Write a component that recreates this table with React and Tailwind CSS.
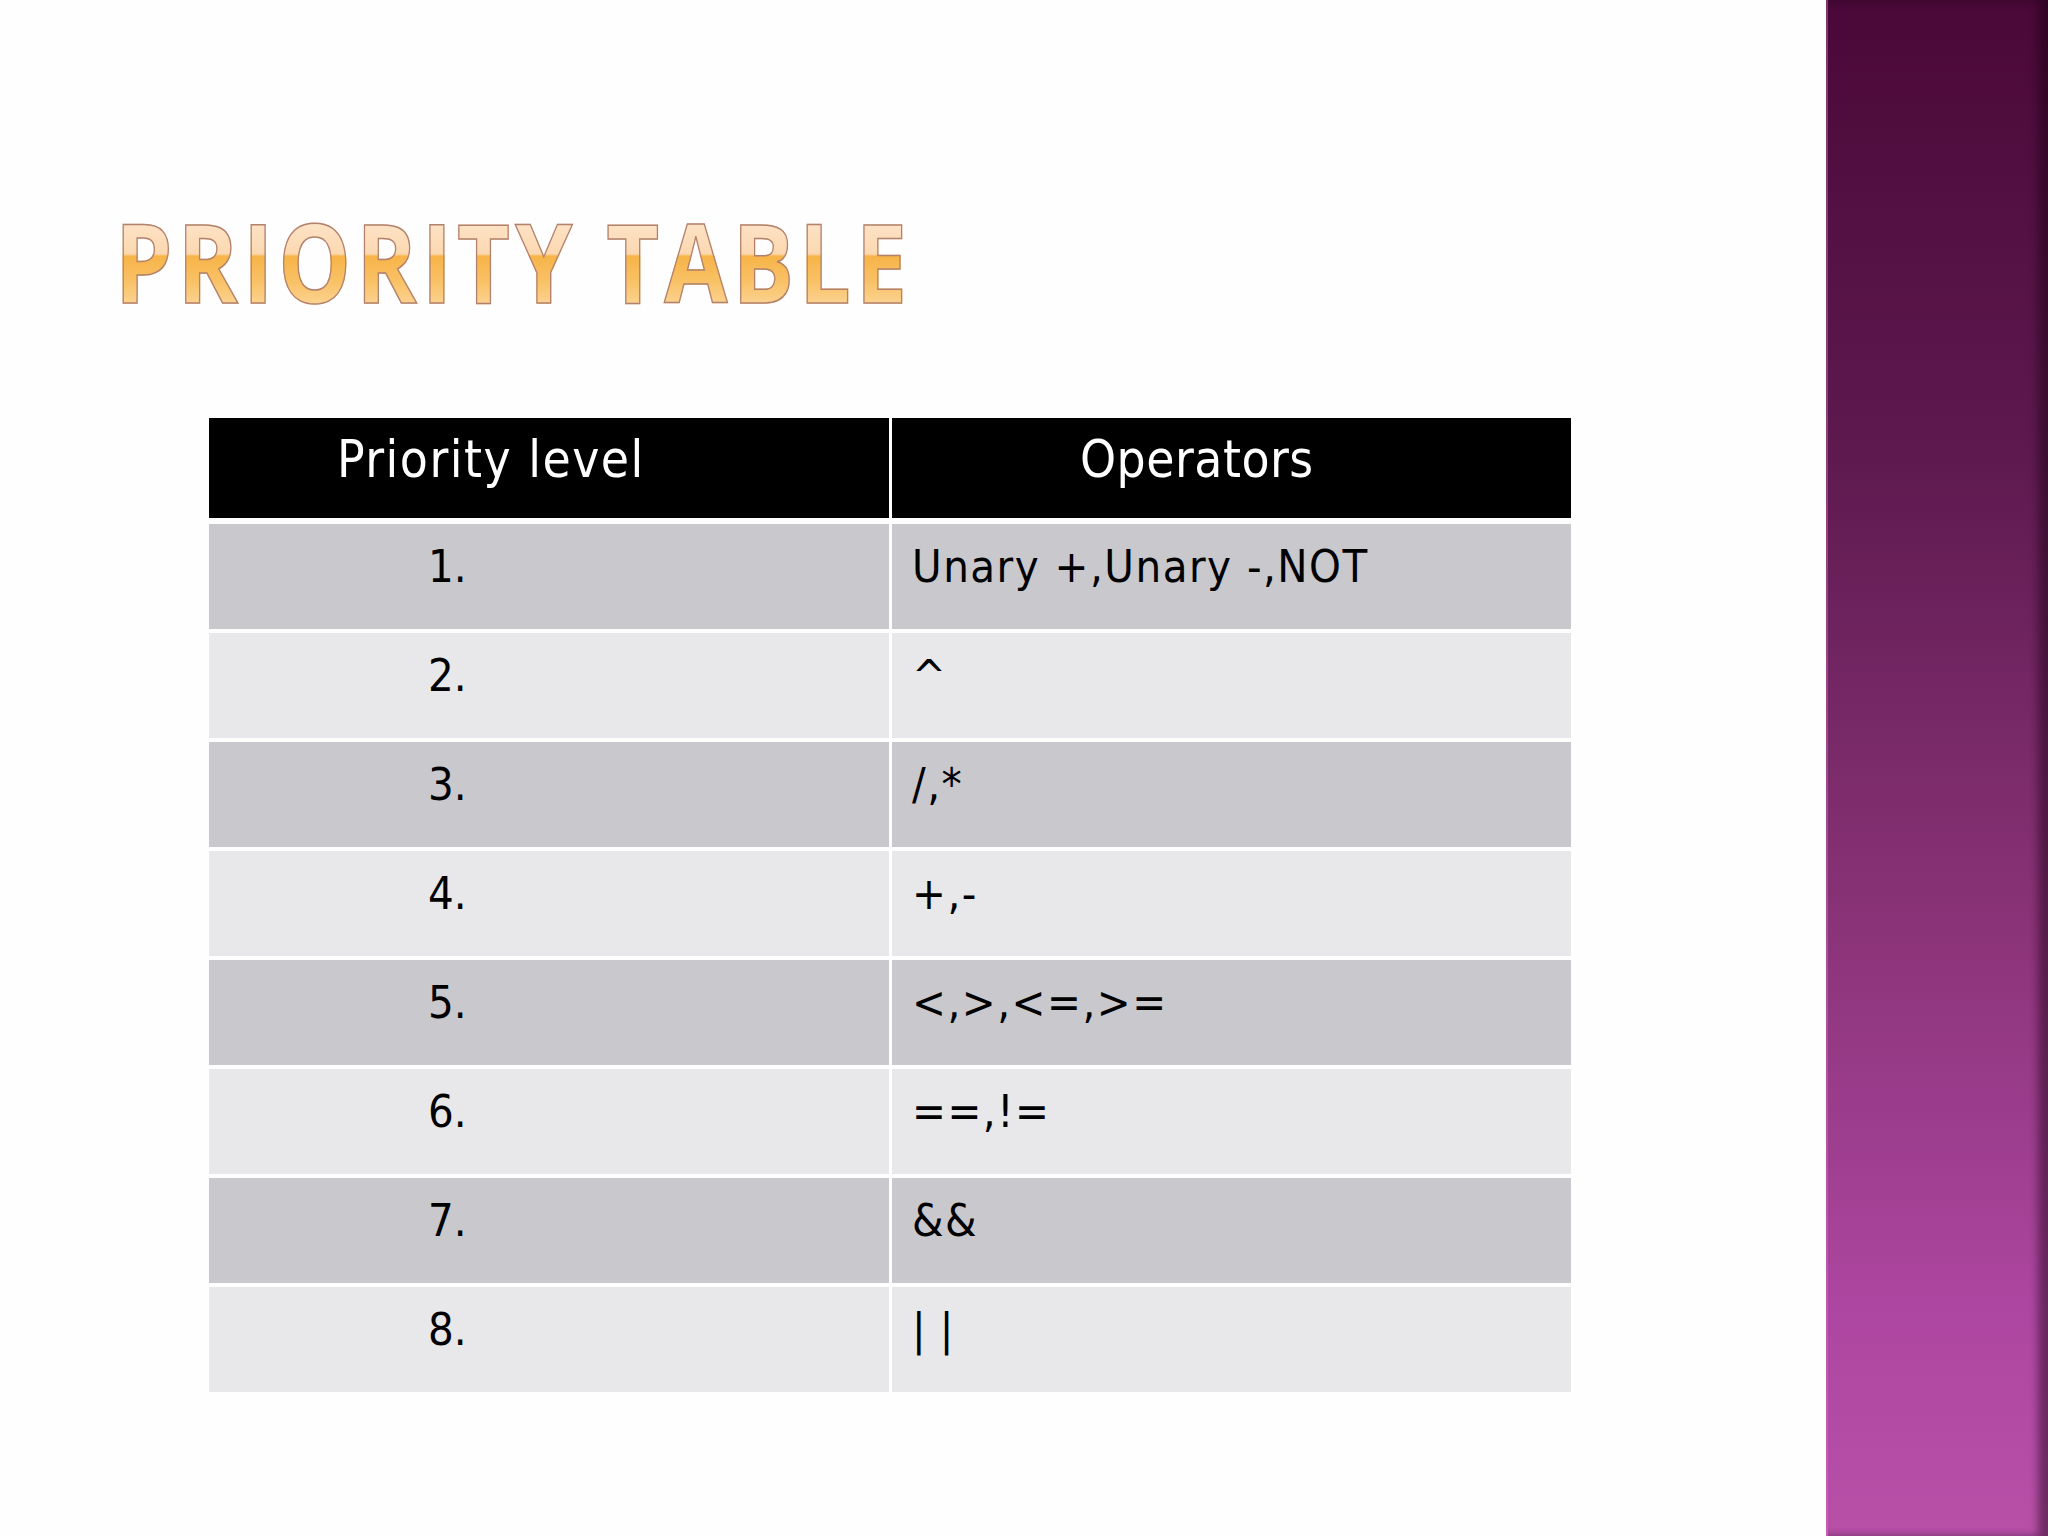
const rows = [
  ['1.', 'Unary +,Unary -,NOT'],
  ['2.', '^'],
  ['3.', '/,*'],
  ['4.', '+,-'],
  ['5.', '<,>,<=,>='],
  ['6.', '==,!='],
  ['7.', '&&'],
  ['8.', '||'],
];

export default function App() {
  return (
    <div className="flex h-[1536px] w-[2048px] overflow-hidden bg-[#fefefe]">
      {/* slide body */}
      <div className="flex flex-1 flex-col pt-[206px]">
        <div className="pl-[115px]">
          <h1
            className="inline-block origin-left scale-x-[0.84] bg-[linear-gradient(180deg,#fde8d2_0%,#fcd8b0_44%,#f7b448_46%,#f9c267_70%,#fcdba6_100%)] bg-clip-text text-[109px] leading-none font-bold tracking-[6px] text-transparent [-webkit-text-stroke:1.5px_#b3826f]"
            style={{ fontFamily: '"Open Sans", sans-serif' }}
          >
            PRIORITY TABLE
          </h1>
        </div>

        {/* table */}
        <div
          className="mt-[103px] ml-[209px] w-[1362px]"
          style={{ fontFamily: '"DejaVu Sans Condensed", "DejaVu Sans", sans-serif' }}
        >
          <div className="flex h-[100px] gap-[3px] bg-white">
            <div className="w-[680px] bg-black pt-[16px] pl-[128px] text-[51px] leading-none tracking-[1.5px] text-white">
              Priority level
            </div>
            <div className="flex-1 bg-black pt-[16px] pl-[188px] text-[51px] leading-none tracking-[0.5px] text-white">
              Operators
            </div>
          </div>
          <div className="mt-[6px] flex flex-col gap-[4px]">
            {rows.map(([lvl, op], i) => (
              <div key={lvl} className="flex h-[105px] gap-[3px]">
                <div
                  className={`w-[680px] pt-[20px] pl-[219px] text-[45px] leading-none text-black ${
                    i % 2 === 0 ? 'bg-[#c9c8cc]' : 'bg-[#e8e7ea]'
                  }`}
                >
                  {lvl}
                </div>
                <div
                  className={`flex-1 pt-[20px] pl-[20px] text-[45px] leading-none whitespace-pre text-black ${
                    op === '||' ? 'tracking-[14px]' : 'tracking-[1.5px]'
                  } ${i % 2 === 0 ? 'bg-[#c9c8cc]' : 'bg-[#e8e7ea]'}`}
                >
                  {op}
                </div>
              </div>
            ))}
          </div>
        </div>
      </div>

      {/* purple side band */}
      <div className="h-full w-[222px] border-l-2 border-[#d878c8]/40 bg-[linear-gradient(180deg,#4a0838_0%,#5e1a4f_30%,#8a3378_60%,#ad46a0_85%,#b850a8_100%)] shadow-[inset_-10px_0_8px_rgba(20,0,15,0.45)]" />
    </div>
  );
}
